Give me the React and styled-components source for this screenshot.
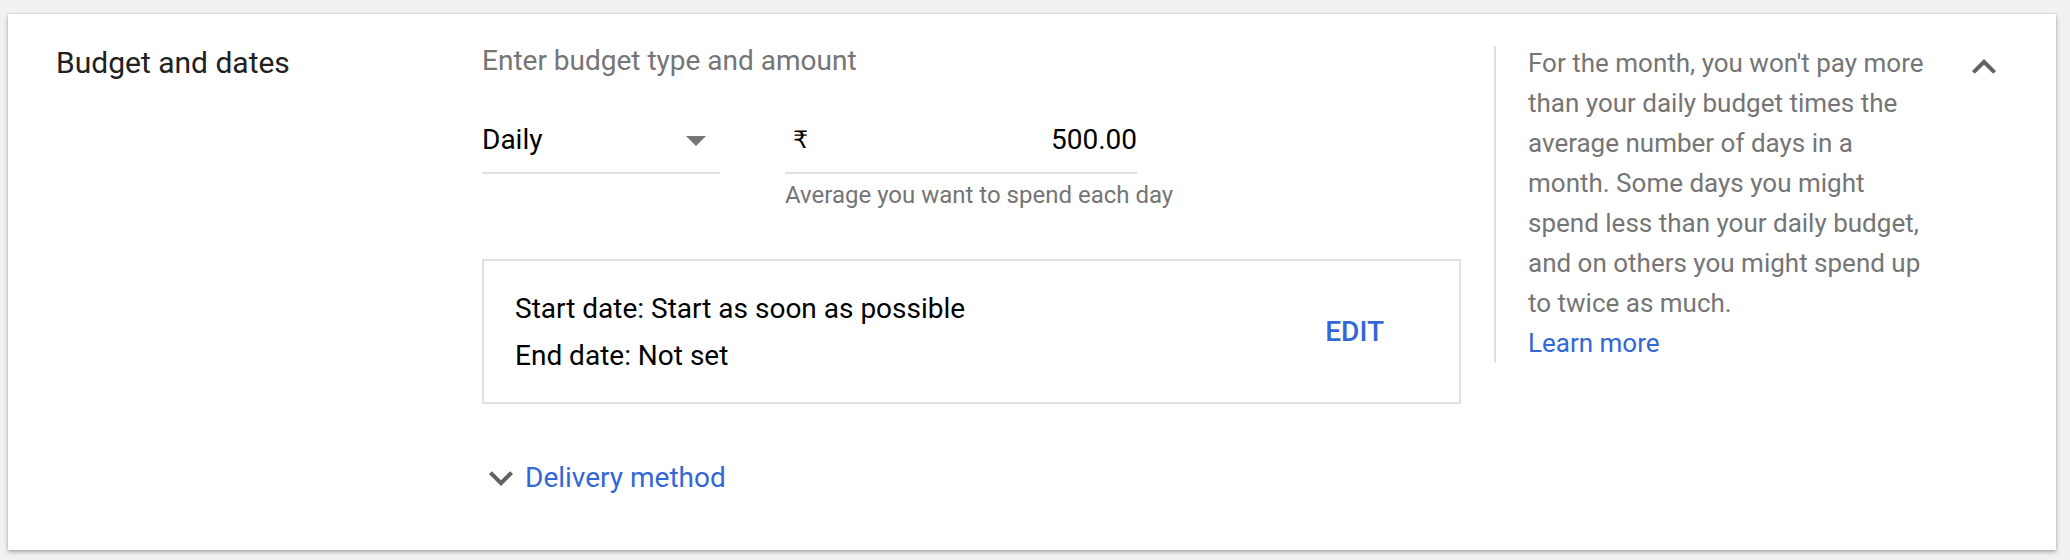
import React from 'react';
import styled, { createGlobalStyle } from 'styled-components';

const GlobalStyle = createGlobalStyle`
  html, body {
    margin: 0;
    background: #f1f1f1;
    font-family: Roboto, "Liberation Sans", Arial, sans-serif;
  }
`;

const Page = styled.div`
  padding: 14px 14px 10px 8px;
`;

const Card = styled.section`
  display: flex;
  align-items: flex-start;
  background: #fff;
  padding: 29px 48px 48px 48px;
  box-shadow: 0 2px 4px rgba(0, 0, 0, 0.3), 0 0 2px rgba(0, 0, 0, 0.12);
`;

const Title = styled.h2`
  width: 426px;
  flex: none;
  margin: 0;
  font-size: 30px;
  line-height: 40px;
  font-weight: 400;
  color: #212121;
`;

const Main = styled.div`
  width: 979px;
  flex: none;
  display: flex;
  flex-direction: column;
  align-items: flex-start;
`;

const Hint = styled.div`
  font-size: 28px;
  line-height: 36px;
  color: #757575;
`;

const Fields = styled.div`
  display: flex;
  gap: 65px;
  margin-top: 43px;
`;

const Field = styled.div`
  display: flex;
  align-items: center;
  width: ${p => p.$width}px;
  height: 36px;
  padding-bottom: 14px;
  border-bottom: 2px solid #e0e0e0;
  font-size: 28px;
  line-height: 36px;
  color: #000;
`;

const Grow = styled.span`
  flex: 1;
  text-align: ${p => p.$align || 'left'};
`;

const Rupee = styled.span`
  padding-left: 8px;
  font-family: "DejaVu Sans", Roboto, sans-serif;
  font-size: 24px;
`;

const Helper = styled.div`
  margin: 5px 0 0 ${p => p.$offset}px;
  font-size: 24px;
  line-height: 32px;
  color: #757575;
`;

const DateBox = styled.div`
  box-sizing: border-box;
  width: 979px;
  height: 145px;
  margin-top: 48px;
  padding: 0 43px 0 31px;
  border: 2px solid #e0e0e0;
  display: flex;
  align-items: center;
  justify-content: space-between;
`;

const DateLine = styled.div`
  font-size: 28px;
  line-height: 47px;
  color: #000;
`;

const TextButton = styled.button`
  border: 0;
  background: none;
  padding: 0 32px;
  font-family: Roboto, "Liberation Sans", sans-serif;
  font-size: 28px;
  font-weight: 500;
  line-height: 36px;
  color: #3367d6;
  cursor: pointer;
`;

const Toggle = styled.button`
  display: flex;
  align-items: center;
  margin: 50px 0 0 -5px;
  padding: 0;
  border: 0;
  background: none;
  font-family: Roboto, "Liberation Sans", sans-serif;
  font-size: 28px;
  line-height: 36px;
  color: #3367d6;
  cursor: pointer;
`;

const Aside = styled.aside`
  width: 400px;
  flex: none;
  margin: 3px 0 0 33px;
  padding-left: 32px;
  border-left: 2px solid #e0e0e0;
  font-size: 26px;
  line-height: 40px;
  color: #757575;
`;

const Text = styled.p`
  margin: 0;
  margin-top: -3px;
`;

const Link = styled.a`
  color: #3367d6;
  text-decoration: none;
`;

const Collapse = styled.button`
  margin-left: auto;
  width: 48px;
  height: 48px;
  padding: 0;
  border: 0;
  background: none;
  cursor: pointer;
`;

const Icon = ({ d, size = 48, color = '#616161' }) => (
  <svg width={size} height={size} viewBox="0 0 24 24" fill={color} style={{ display: 'block', flex: 'none' }}>
    <path d={d} />
  </svg>
);

const ARROW_DROP_DOWN = 'M7 10l5 5 5-5z';
const EXPAND_MORE = 'M16.59 8.59L12 13.17 7.41 8.59 6 10l6 6 6-6z';
const EXPAND_LESS = 'M12 8l-6 6 1.41 1.41L12 10.83l4.59 4.58L18 14z';

export default function App() {
  return (
    <Page>
      <GlobalStyle />
      <Card>
        <Title>Budget and dates</Title>
        <Main>
          <Hint>Enter budget type and amount</Hint>
          <div>
            <Fields>
              <Field $width={238}>
                <Grow>Daily</Grow>
                <Icon d={ARROW_DROP_DOWN} color="#757575" />
              </Field>
              <Field $width={352}>
                <Rupee>₹</Rupee>
                <Grow $align="right">500.00</Grow>
              </Field>
            </Fields>
            <Helper $offset={303}>Average you want to spend each day</Helper>
          </div>
          <DateBox>
            <div>
              <DateLine>Start date: Start as soon as possible</DateLine>
              <DateLine>End date: Not set</DateLine>
            </div>
            <TextButton>EDIT</TextButton>
          </DateBox>
          <Toggle>
            <Icon d={EXPAND_MORE} />
            Delivery method
          </Toggle>
        </Main>
        <Aside>
          <Text>
            For the month, you won't pay more than your daily budget times the average number of days
            in a month. Some days you might spend less than your daily budget, and on others you might
            spend up to twice as much.
          </Text>
          <Link href="#">Learn more</Link>
        </Aside>
        <Collapse aria-label="Collapse">
          <Icon d={EXPAND_LESS} />
        </Collapse>
      </Card>
    </Page>
  );
}
